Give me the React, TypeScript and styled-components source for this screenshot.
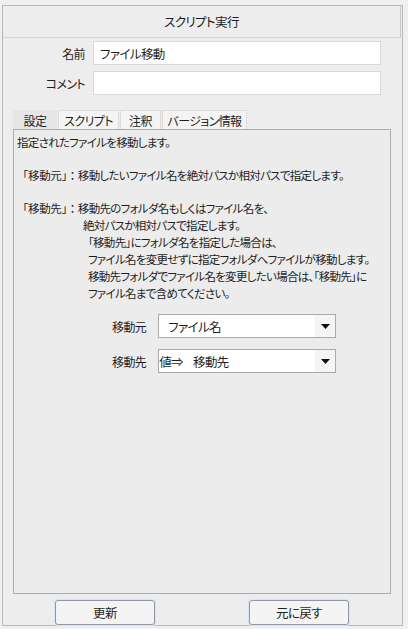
import styled, { createGlobalStyle } from "styled-components";

const GlobalStyle = createGlobalStyle`
  body {
    margin: 0;
    background: #f0f0f0;
    font-family: "Noto Sans CJK JP", "Noto Sans", sans-serif;
    font-size: 12px;
    letter-spacing: -0.6px;
    color: #1e1e1e;
    font-feature-settings: "palt";
  }
`;

const Frame = styled.div`
  box-sizing: border-box;
  margin: 5px 0 0 2px;
  width: 401px;
  height: 621px;
  border: 1px solid #b9b9b9;
  background: #ededed;
  display: flex;
  flex-direction: column;
`;

const Header = styled.div`
  height: 31px;
  margin-right: 1px;
  border-bottom: 1px solid #d6d6d6;
  border-right: 1px solid #c8c8c8;
  display: flex;
  align-items: center;
  justify-content: center;
  font-size: 12.5px;
`;

const Form = styled.div`
  display: flex;
  flex-direction: column;
  gap: 6px;
  padding: 3px 0 0;
`;

const FieldRow = styled.div`
  display: grid;
  grid-template-columns: 82px 288px;
  column-gap: 8px;
  align-items: center;
`;

const Label = styled.span`
  text-align: right;
`;

const TextBox = styled.div`
  box-sizing: border-box;
  height: 24px;
  border: 1px solid #dadada;
  background: #fff;
  padding: 0 6px;
  display: flex;
  align-items: center;
  font-size: 12.5px;
`;

const Body = styled.div`
  flex: 1;
  display: flex;
  flex-direction: column;
  padding: 15px 11px 0 10px;
`;

const TabBar = styled.div`
  display: flex;
  gap: 1px;
  height: 19px;
`;

const Tab = styled.div<{ $active?: boolean; $w: number }>`
  box-sizing: border-box;
  width: ${(p) => p.$w}px;
  display: flex;
  align-items: center;
  justify-content: center;
  background: ${(p) => (p.$active ? "#e6e6e6" : "#f4f4f4")};
  border: 1px solid ${(p) => (p.$active ? "#e6e6e6" : "#dcdcdc")};
  border-bottom: none;
`;

const Panel = styled.div`
  box-sizing: border-box;
  height: 465px;
  border: 1px solid #acacac;
  background: #ececec;
  padding: 4px 3px;
`;

const Para = styled.p`
  margin: 0 0 16px;
  font-size: 11.5px;
  letter-spacing: -0.7px;
  line-height: 17px;
  white-space: pre;
`;

const Key = styled.span`
  font-feature-settings: normal;
  letter-spacing: -0.4px;
`;

const Indent = styled.span`
  display: block;
  padding-left: 71px;
  text-indent: -5px;
`;

// pulls the selects up a little under the last paragraph's margin
const Selects = styled.div`
  display: flex;
  flex-direction: column;
  gap: 11px;
  margin-top: -4px;
  padding-left: 95px;
`;

const SelectRow = styled.div`
  display: flex;
  align-items: center;
  gap: 12px;
`;

const Select = styled.div`
  box-sizing: border-box;
  width: 178px;
  height: 24px;
  border: 1px solid #ababab;
  background: #fff;
  display: flex;
  align-items: stretch;
`;

const SelectValue = styled.div`
  flex: 1;
  display: flex;
  align-items: center;
  padding-left: 9px;
  font-size: 12.5px;
`;

const Prefix = styled.span`
  margin-left: -9px;
  margin-right: 10px;
`;

const Arrow = styled.div`
  width: 20px;
  background: #f5f5f5;
  display: flex;
  align-items: center;
  justify-content: center;
`;

const Footer = styled.div`
  display: flex;
  justify-content: space-between;
  padding: 4px 53px 0 52px;
`;

const Button = styled.button`
  box-sizing: border-box;
  width: 100px;
  height: 25px;
  border: 1px solid #8f99a6;
  border-radius: 3px;
  background: #f4f4f4;
  box-shadow: 0 0 0 1px #d6e6f7;
  font-family: inherit;
  font-size: 12.5px;
  letter-spacing: inherit;
  font-feature-settings: "palt";
  color: #1e1e1e;
  padding: 0;
`;

const ArrowIcon = () => (
  <svg width="9" height="5" viewBox="0 0 9 5">
    <path d="M0 0h9L4.5 5z" fill="#111" />
  </svg>
);

export default function App() {
  return (
    <>
      <GlobalStyle />
      <Frame>
        <Header>スクリプト実行</Header>
        <Form>
          <FieldRow>
            <Label>名前</Label>
            <TextBox>ファイル移動</TextBox>
          </FieldRow>
          <FieldRow>
            <Label>コメント</Label>
            <TextBox />
          </FieldRow>
        </Form>
        <Body>
          <TabBar>
            <Tab $active $w={44}>設定</Tab>
            <Tab $w={61}>スクリプト</Tab>
            <Tab $w={41}>注釈</Tab>
            <Tab $w={85}>バージョン情報</Tab>
          </TabBar>
          <Panel>
            <Para>指定されたファイルを移動します。</Para>
            <Para>
              <Key>「移動元」：</Key>移動したいファイル名を絶対パスか相対パスで指定します。
            </Para>
            <Para>
              <Key>「移動先」：</Key>移動先のフォルダ名もしくはファイル名を、
              <Indent>
                絶対パスか相対パスで指定します。
                <br />
                「移動先」にフォルダ名を指定した場合は、
                <br />
                ファイル名を変更せずに指定フォルダへファイルが移動します。
                <br />
                移動先フォルダでファイル名を変更したい場合は、「移動先」に
                <br />
                ファイル名まで含めてください。
              </Indent>
            </Para>
            <Selects>
              <SelectRow>
                <span>移動元</span>
                <Select>
                  <SelectValue>ファイル名</SelectValue>
                  <Arrow>
                    <ArrowIcon />
                  </Arrow>
                </Select>
              </SelectRow>
              <SelectRow>
                <span>移動先</span>
                <Select>
                  <SelectValue>
                    <Prefix>値⇒</Prefix>移動先
                  </SelectValue>
                  <Arrow>
                    <ArrowIcon />
                  </Arrow>
                </Select>
              </SelectRow>
            </Selects>
          </Panel>
        </Body>
        <Footer>
          <Button>更新</Button>
          <Button>元に戻す</Button>
        </Footer>
      </Frame>
    </>
  );
}
